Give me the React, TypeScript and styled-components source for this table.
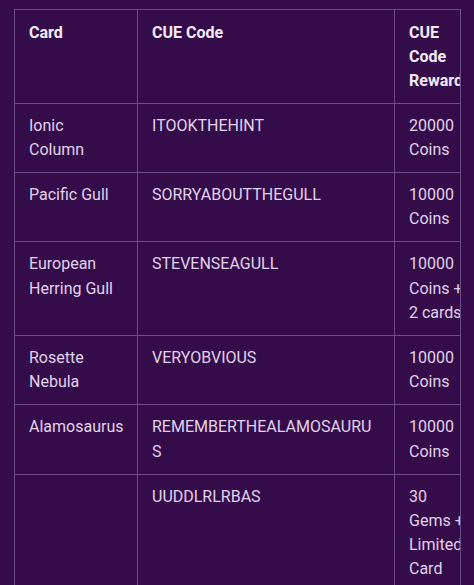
import React from 'react';
import styled, { createGlobalStyle } from 'styled-components';

const GlobalStyle = createGlobalStyle`
  html, body {
    margin: 0;
    padding: 0;
    background: #330c49;
  }
  body {
    font-family: Roboto, "Noto Sans", sans-serif;
    color: #e2d3ed;
    overflow: hidden;
  }
`;

const Page = styled.div`
  min-height: 100vh;
  padding: 9px 0 0 14px;
  box-sizing: border-box;
`;

const Scroller = styled.div`
  width: 447px;
  overflow: hidden;
  border-right: 1px solid #6b4c87;
  box-sizing: border-box;
`;

const Table = styled.table`
  border-collapse: collapse;
  table-layout: fixed;
  width: 470px;
  font-size: 16px;
  line-height: 24.2px;
`;

const Col = styled.col<{ $w: number }>`
  width: ${(p) => p.$w}px;
`;

const Th = styled.th`
  text-align: left;
  vertical-align: top;
  font-weight: 700;
  color: #f3ebf8;
  padding: 11px 14px 9px 14px;
  border: 1px solid #6b4c87;
`;

// first column wraps narrower than the others
const Td = styled.td<{ $code?: boolean; $narrow?: boolean }>`
  vertical-align: top;
  font-weight: 400;
  padding: 10px ${(p) => (p.$narrow ? 19 : 14)}px 10px 14px;
  border: 1px solid #6b4c87;
  overflow-wrap: ${(p) => (p.$code ? 'anywhere' : 'normal')};
  word-break: ${(p) => (p.$code ? 'break-all' : 'normal')};
`;

const rows = [
  { card: 'Ionic Column', code: 'ITOOKTHEHINT', reward: '20000 Coins' },
  { card: 'Pacific Gull', code: 'SORRYABOUTTHEGULL', reward: '10000 Coins' },
  { card: 'European Herring Gull', code: 'STEVENSEAGULL', reward: '10000 Coins + 2 cards' },
  { card: 'Rosette Nebula', code: 'VERYOBVIOUS', reward: '10000 Coins' },
  { card: 'Alamosaurus', code: 'REMEMBERTHEALAMOSAURUS', reward: '10000 Coins' },
  { card: '', code: 'UUDDLRLRBAS', reward: '30 Gems + Limited Card' },
];

export default function App() {
  return (
    <>
      <GlobalStyle />
      <Page>
        <Scroller>
          <Table>
            <colgroup>
              <Col $w={123} />
              <Col $w={257} />
              <Col $w={90} />
            </colgroup>
            <thead>
              <tr>
                <Th>Card</Th>
                <Th>CUE Code</Th>
                <Th>CUE Code Rewards</Th>
              </tr>
            </thead>
            <tbody>
              {rows.map((r) => (
                <tr key={r.code}>
                  <Td $narrow>{r.card}</Td>
                  <Td $code>{r.code}</Td>
                  <Td>{r.reward}</Td>
                </tr>
              ))}
            </tbody>
          </Table>
        </Scroller>
      </Page>
    </>
  );
}
